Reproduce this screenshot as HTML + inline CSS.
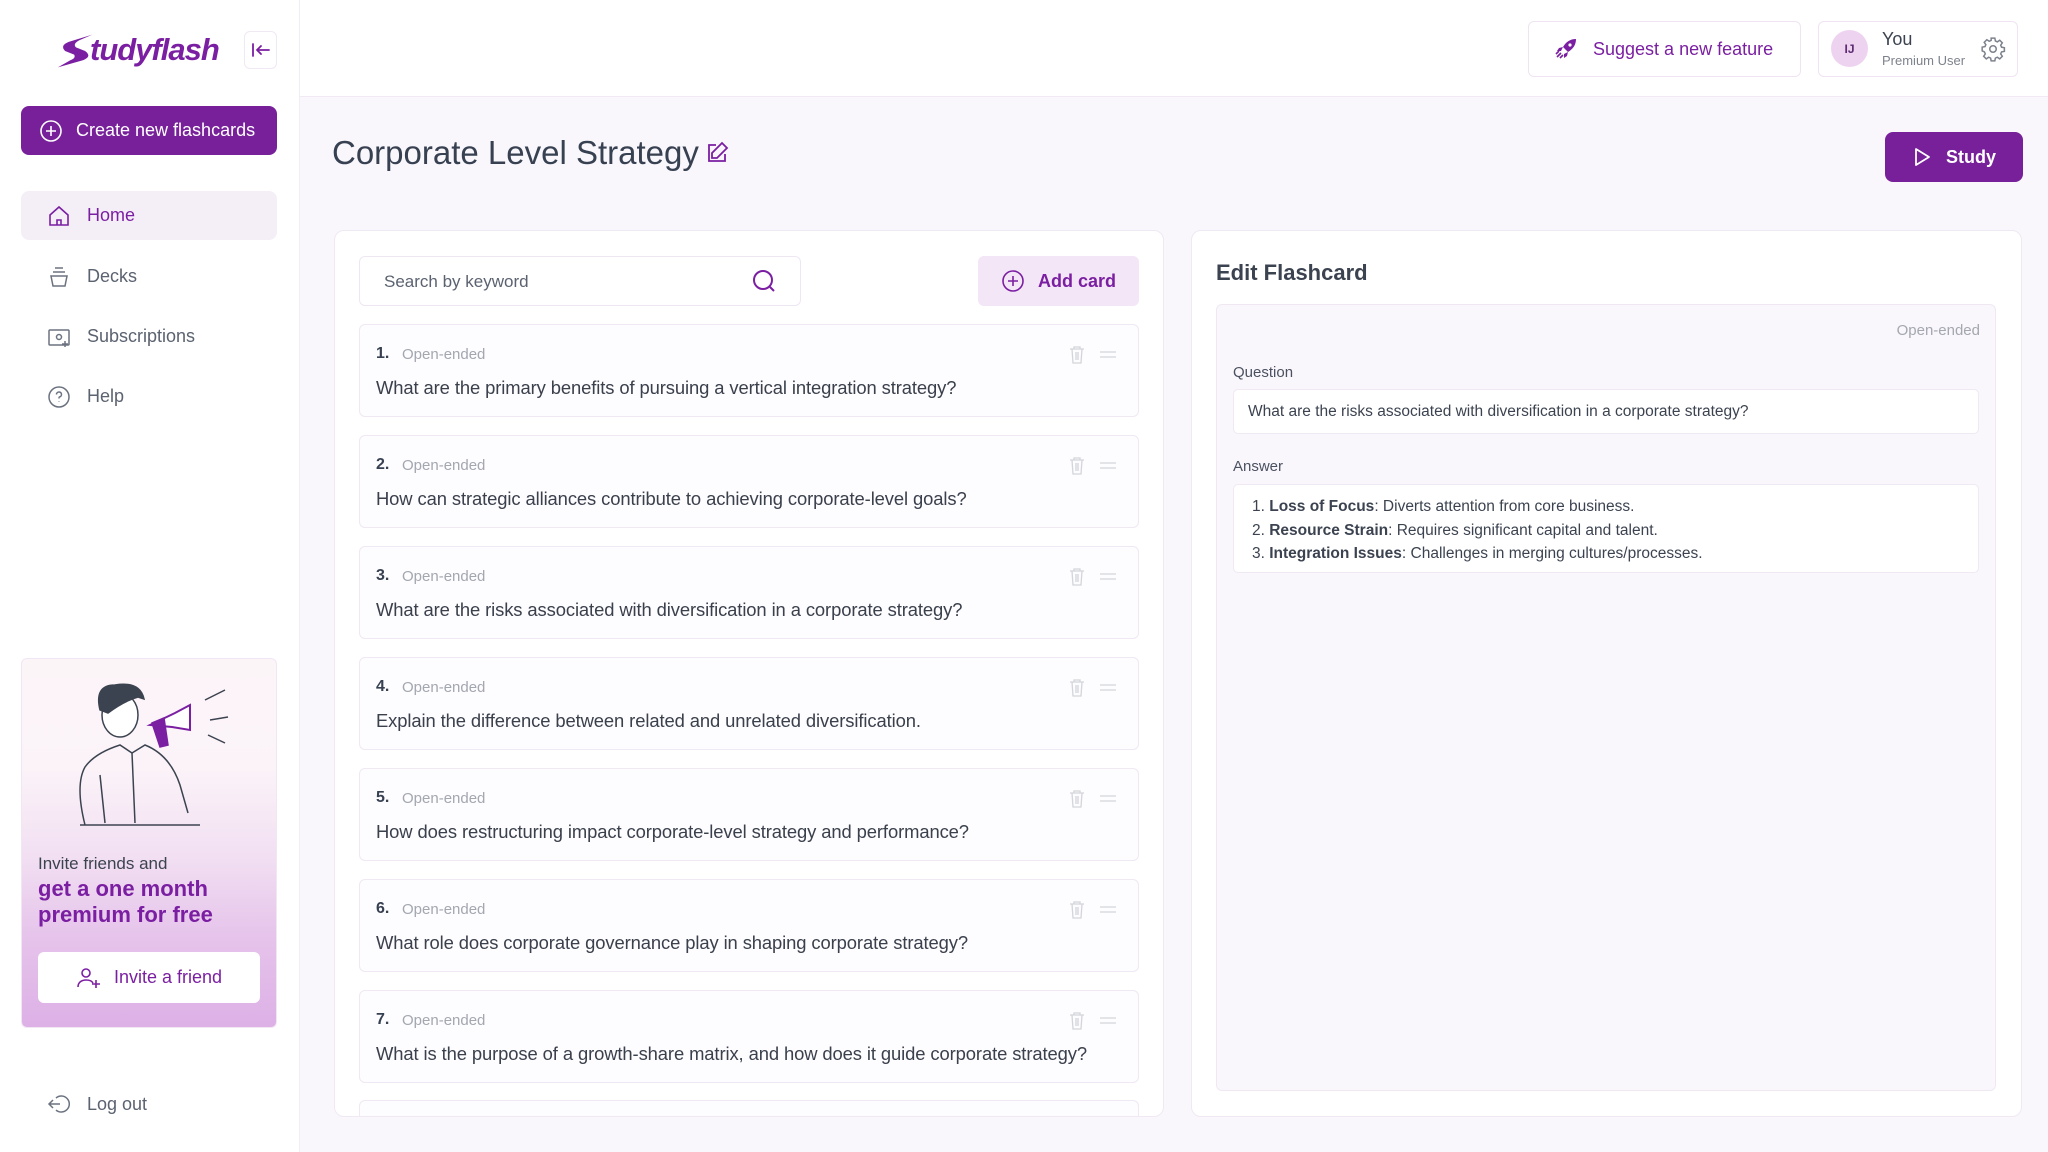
<!DOCTYPE html>
<html><head><meta charset="utf-8"><style>
*{box-sizing:border-box;margin:0;padding:0}
body{width:2048px;height:1152px;overflow:hidden;background:#f9f7fb;font-family:"Liberation Sans",sans-serif;color:#374151;position:relative}
.abs{position:absolute}
.side{left:0;top:0;width:300px;height:1152px;background:#fff;border-right:1px solid #f1edf4}
.header{left:300px;top:0;width:1748px;height:97px;background:#fff;border-bottom:1px solid #f1eaf5}
.btnp{background:#77209a;color:#fff;border-radius:8px;display:flex;align-items:center;font-size:18px}
.nav{left:21px;width:256px;height:49px;border-radius:8px;display:flex;align-items:center;padding-left:26px;font-size:18px;color:#5b6270}
.nav svg{margin-right:16px}
.panel{background:#fff;border:1px solid #f0e8f3;border-radius:10px}
.card{left:359px;width:780px;height:93px;background:#fdfcfe;border:1px solid #f0e8f3;border-radius:6px}
.card .n{position:absolute;left:16px;top:20px;font-size:16px;color:#374151;font-weight:bold}
.card .t{position:absolute;left:42px;top:21px;font-size:15px;color:#a3a7af}
.card .q{position:absolute;left:16px;top:52px;font-size:18.4px;color:#3a404c;letter-spacing:-0.1px}
.card .ic{position:absolute;right:20px;top:20px}
</style></head><body>
<div class="abs side"></div>
<!-- logo -->
<svg class="abs" style="left:56px;top:32px" width="40" height="38" viewBox="0 0 44 40"><path d="M40 2 L14 10 Q4 14 10 20 L20 24 Q22 28 16 30 L2 38 L30 30 Q40 26 32 20 L22 16 Q18 12 26 8 Z" fill="#7b1fa2"/></svg>
<div class="abs" style="left:90px;top:32px;font-size:31px;font-weight:bold;font-style:italic;color:#7b1fa2;letter-spacing:-1px">tudyflash</div>
<div class="abs" style="left:244px;top:31px;width:33px;height:38px;border:1px solid #f0e8f3;border-radius:6px;display:flex;align-items:center;justify-content:center">
<svg width="20" height="16" viewBox="0 0 20 16" fill="none" stroke="#7b1fa2" stroke-width="1.8" stroke-linecap="round"><path d="M2 2v12M18 8H6M10 4L6 8l4 4"/></svg></div>
<div class="abs btnp" style="left:21px;top:106px;width:256px;height:49px;padding-left:18px;font-size:18px">
<svg width="24" height="24" viewBox="0 0 24 24" fill="none" stroke="#fff" stroke-width="1.6" style="margin-right:13px"><circle cx="12" cy="12" r="10"/><path d="M12 7v10M7 12h10"/></svg>Create new flashcards</div>
<div class="abs nav" style="top:191px;background:#f4eff7;color:#7b1fa2"><svg width="24" height="24" viewBox="0 0 24 24" fill="none" stroke="#7b1fa2" stroke-width="1.6"><path d="M3 11L12 3l9 8v10H3z"/><path d="M10 21v-5h4v5"/></svg>Home</div>
<div class="abs nav" style="top:252px"><svg width="24" height="24" viewBox="0 0 24 24" fill="none" stroke="#6b7280" stroke-width="1.5"><path d="M8 3h8M6 7h12M4 11h16l-2 10H6z"/></svg>Decks</div>
<div class="abs nav" style="top:312px"><svg width="24" height="24" viewBox="0 0 24 24" fill="none" stroke="#6b7280" stroke-width="1.5"><rect x="2" y="5" width="20" height="15" rx="1"/><circle cx="12" cy="12" r="2.5"/><path d="M18 16v6M15 19h6"/></svg>Subscriptions</div>
<div class="abs nav" style="top:372px"><svg width="24" height="24" viewBox="0 0 24 24" fill="none" stroke="#6b7280" stroke-width="1.5"><circle cx="12" cy="12" r="10"/><path d="M9.5 9.5a2.5 2.5 0 1 1 3 2.4c-.6.2-.5.8-.5 1.6M12 16.5v.5"/></svg>Help</div>
<!-- promo -->
<div class="abs" style="left:21px;top:658px;width:256px;height:370px;border-radius:6px;border:1px solid #f1e6f4;background:linear-gradient(180deg,#fcf5f8 0%,#fbf3f8 30%,#f1def2 55%,#e6c4eb 75%,#ddb0e6 100%)"></div>
<svg class="abs" style="left:60px;top:675px" width="180" height="160" viewBox="0 0 180 160" fill="none" stroke="#3c4350" stroke-width="1.5">
<path d="M20 150 H140" /><path d="M25 150 Q15 110 25 92 Q35 78 60 70 L72 78 L85 70 Q110 80 120 110 L128 138"/>
<path d="M72 78 L75 148"/><path d="M40 100 L45 148"/>
<ellipse cx="60" cy="40" rx="18" ry="22" fill="#fff"/>
<path d="M40 35 Q34 10 55 10 Q80 6 84 24 L78 22 Q64 26 48 38 Z" fill="#3c4350"/>
<path d="M90 50 L115 38 L130 30 L130 55 L112 52 Z" fill="#fff" stroke="#7b1fa2" stroke-width="2"/>
<path d="M92 48 L104 43 L108 70 L100 72 Z" fill="#7b1fa2" stroke="#7b1fa2"/>
<path d="M145 25 L165 15M150 45 L168 42M148 60 L165 68" />
</svg>
<div class="abs" style="left:38px;top:854px;font-size:17px;color:#3c4350">Invite friends and</div>
<div class="abs" style="left:38px;top:876px;font-size:22px;line-height:26px;font-weight:bold;color:#7b1fa2">get a one month<br>premium for free</div>
<div class="abs" style="left:38px;top:952px;width:222px;height:51px;background:#fff;border-radius:6px;display:flex;align-items:center;justify-content:center;color:#7b1fa2;font-size:18px">
<svg width="26" height="22" viewBox="0 0 26 22" fill="none" stroke="#7b1fa2" stroke-width="1.6" style="margin-right:12px"><circle cx="10" cy="6" r="4"/><path d="M2 20c0-5 4-7 8-7s6 1 7 3M20 13v8M16 17h8"/></svg>Invite a friend</div>
<div class="abs" style="left:47px;top:1092px;display:flex;align-items:center;font-size:18px;color:#5b6270">
<svg width="24" height="24" viewBox="0 0 24 24" fill="none" stroke="#6b7280" stroke-width="1.5" style="margin-right:16px"><path d="M9 6a8 8 0 1 1 0 12M2 12h11M6 8l-4 4 4 4"/></svg>Log out</div>

<div class="abs header"></div>
<div class="abs" style="left:1528px;top:21px;width:273px;height:56px;border:1px solid #f0e4f3;border-radius:6px;background:#fff;display:flex;align-items:center;padding-left:25px;color:#7b1fa2;font-size:18px">
<svg width="24" height="24" viewBox="0 0 24 24" fill="#7b1fa2" style="margin-right:15px"><path d="M22 2c-6 0-10 3-13 8l5 5c5-3 8-7 8-13zM9 10l-4 1-2 3 4 0zM14 15l-1 4-3 2 0-4z"/><circle cx="16" cy="8" r="1.6" fill="#fff"/><path d="M7 16l-4 4M9 18l-3 3M5 14l-3 3" stroke="#7b1fa2" stroke-width="1.6"/></svg>Suggest a new feature</div>
<div class="abs" style="left:1818px;top:21px;width:200px;height:56px;border:1px solid #f0e4f3;border-radius:6px;background:#fff"></div>
<div class="abs" style="left:1831px;top:30px;width:37px;height:37px;border-radius:50%;background:#eed3f1;display:flex;align-items:center;justify-content:center;font-size:12px;color:#5b2a70;font-weight:bold">IJ</div>
<div class="abs" style="left:1882px;top:29px;font-size:18px;color:#3c4350">You</div>
<div class="abs" style="left:1882px;top:53px;font-size:13px;color:#7d828c">Premium User</div>
<svg class="abs" style="left:1980px;top:36px" width="26" height="26" viewBox="0 0 24 24" fill="none" stroke="#7d828c" stroke-width="1.4"><circle cx="12" cy="12" r="3"/><path d="M10.3 2h3.4l.5 2.6 1.8.8 2.2-1.5 2.4 2.4-1.5 2.2.8 1.8 2.6.5v3.4l-2.6.5-.8 1.8 1.5 2.2-2.4 2.4-2.2-1.5-1.8.8-.5 2.6h-3.4l-.5-2.6-1.8-.8-2.2 1.5-2.4-2.4 1.5-2.2-.8-1.8L2 13.7v-3.4l2.6-.5.8-1.8-1.5-2.2 2.4-2.4 2.2 1.5 1.8-.8z"/></svg>

<div class="abs" style="left:332px;top:134px;font-size:33px;color:#374151">Corporate Level Strategy</div>
<svg class="abs" style="left:705px;top:141px" width="24" height="24" viewBox="0 0 24 24" fill="none" stroke="#7b1fa2" stroke-width="1.8"><path d="M11 4H4v16h16v-7"/><path d="M17 2l5 5-10 10H7v-5z"/></svg>
<div class="abs btnp" style="left:1885px;top:132px;width:138px;height:50px;justify-content:center;font-size:18px;font-weight:bold">
<svg width="20" height="22" viewBox="0 0 20 22" fill="none" stroke="#fff" stroke-width="1.8" style="margin-right:14px"><path d="M4 3l13 8-13 8z" stroke-linejoin="round"/></svg>Study</div>

<div class="abs panel" style="left:334px;top:230px;width:830px;height:887px"></div>
<div class="abs" style="left:359px;top:256px;width:442px;height:50px;border:1px solid #efe6f3;border-radius:6px;background:#fff;padding:15px 24px;font-size:17px;color:#5b6270">Search by keyword</div>
<svg class="abs" style="left:751px;top:268px" width="26" height="26" viewBox="0 0 26 26" fill="none" stroke="#7b1fa2" stroke-width="2"><circle cx="12" cy="12" r="9"/><path d="M19 19l4 4"/></svg>
<div class="abs" style="left:978px;top:256px;width:161px;height:50px;border-radius:6px;background:#f3e6f6;display:flex;align-items:center;justify-content:center;color:#7b1fa2;font-size:18px;font-weight:bold">
<svg width="24" height="24" viewBox="0 0 24 24" fill="none" stroke="#7b1fa2" stroke-width="1.6" style="margin-right:13px"><circle cx="12" cy="12" r="10"/><path d="M12 7v10M7 12h10"/></svg>Add card</div>

<div class="abs" style="left:335px;top:1080px;width:828px;height:36px;overflow:hidden"><div style="position:absolute;left:24px;top:20px;width:780px;height:40px;border:1px solid #f0e8f3;border-radius:6px;background:#fdfcfe"></div></div>

<div id="cards"></div>
<script>
var qs=["What are the primary benefits of pursuing a vertical integration strategy?","How can strategic alliances contribute to achieving corporate-level goals?","What are the risks associated with diversification in a corporate strategy?","Explain the difference between related and unrelated diversification.","How does restructuring impact corporate-level strategy and performance?","What role does corporate governance play in shaping corporate strategy?","What is the purpose of a growth-share matrix, and how does it guide corporate strategy?"];
var h="";for(var i=0;i<7;i++){h+='<div class="abs card" style="top:'+(324+i*111)+'px"><span class="n">'+(i+1)+'.</span><span class="t">Open-ended</span><span class="q">'+qs[i]+'</span><svg class="ic" width="50" height="20" viewBox="0 0 50 20" fill="none" stroke="#d3d5da" stroke-width="1.3"><path d="M2 4h14M6 4V2h6v2M4 4l1 14h8l1-14M8 7v8M10 7v8"/><path d="M32 7h16M32 12h16"/></svg></div>';}
document.getElementById("cards").innerHTML=h;
</script>

<div class="abs panel" style="left:1191px;top:230px;width:831px;height:887px"></div>
<div class="abs" style="left:1216px;top:260px;font-size:22px;font-weight:bold;color:#3c4350">Edit Flashcard</div>
<div class="abs" style="left:1216px;top:304px;width:780px;height:787px;background:#f9f7fb;border:1px solid #efe8f3;border-radius:6px"></div>
<div class="abs" style="left:1870px;top:322px;width:110px;text-align:right;font-size:15px;color:#a3a7af">Open-ended</div>
<div class="abs" style="left:1233px;top:364px;font-size:15px;color:#4b5160">Question</div>
<div class="abs" style="left:1233px;top:389px;width:746px;height:45px;background:#fff;border:1px solid #f0e8f3;border-radius:5px;padding:13px 14px;font-size:15.5px;color:#3c4350">What are the risks associated with diversification in a corporate strategy?</div>
<div class="abs" style="left:1233px;top:458px;font-size:15px;color:#4b5160">Answer</div>
<div class="abs" style="left:1233px;top:484px;width:746px;height:89px;background:#fff;border:1px solid #f0e8f3;border-radius:5px;padding:10px 18px;font-size:15.5px;line-height:23.5px;color:#3c4350">
<div>1. <b>Loss of Focus</b>: Diverts attention from core business.</div>
<div>2. <b>Resource Strain</b>: Requires significant capital and talent.</div>
<div>3. <b>Integration Issues</b>: Challenges in merging cultures/processes.</div>
</div>
</body></html>
